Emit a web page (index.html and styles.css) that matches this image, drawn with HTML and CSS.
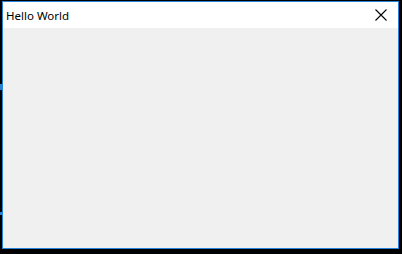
FILE: index.html
```html
<!DOCTYPE html>
<html>
<head>
<meta charset="utf-8">
<link rel="stylesheet" href="styles.css">
</head>
<body>
<div class="frame">
  <span class="mark mark-a"></span>
  <span class="mark mark-b"></span>
  <div class="window">
    <div class="titlebar">
      <span class="title">Hello World</span>
      <span class="close">
        <svg width="12" height="12" viewBox="0 0 12 12"><path d="M0.5 0.5L11.5 11.5M11.5 0.5L0.5 11.5" stroke="#000" stroke-width="1.1" fill="none"/></svg>
      </span>
    </div>
    <div class="client"></div>
  </div>
</div>
</body>
</html>
```
FILE: styles.css
```css
html, body { margin: 0; padding: 0; background: #000; }
.frame {
  position: relative;
  width: 402px; height: 254px;
  padding: 1px 3px 5px 2px;
  box-sizing: border-box;
  display: flex;
}
.mark {
  position: absolute; left: 0; width: 2px;
  background: #2b7fd0;
}
.mark-a { top: 84px; height: 6px; }
.mark-b { top: 212px; height: 3px; }
.window {
  flex: 1;
  border: 1px solid #2683d9;
  display: flex; flex-direction: column;
  background: #f0f0f0;
}
.titlebar {
  height: 26px;
  background: #fff;
  display: flex; align-items: center; justify-content: space-between;
  padding: 0 11px 0 3px;
}
.title {
  font-family: "Noto Sans", "DejaVu Sans", sans-serif;
  font-size: 11.5px; color: #000;
}
.close { display: flex; }
.client { flex: 1; background: #f0f0f0; }
```
